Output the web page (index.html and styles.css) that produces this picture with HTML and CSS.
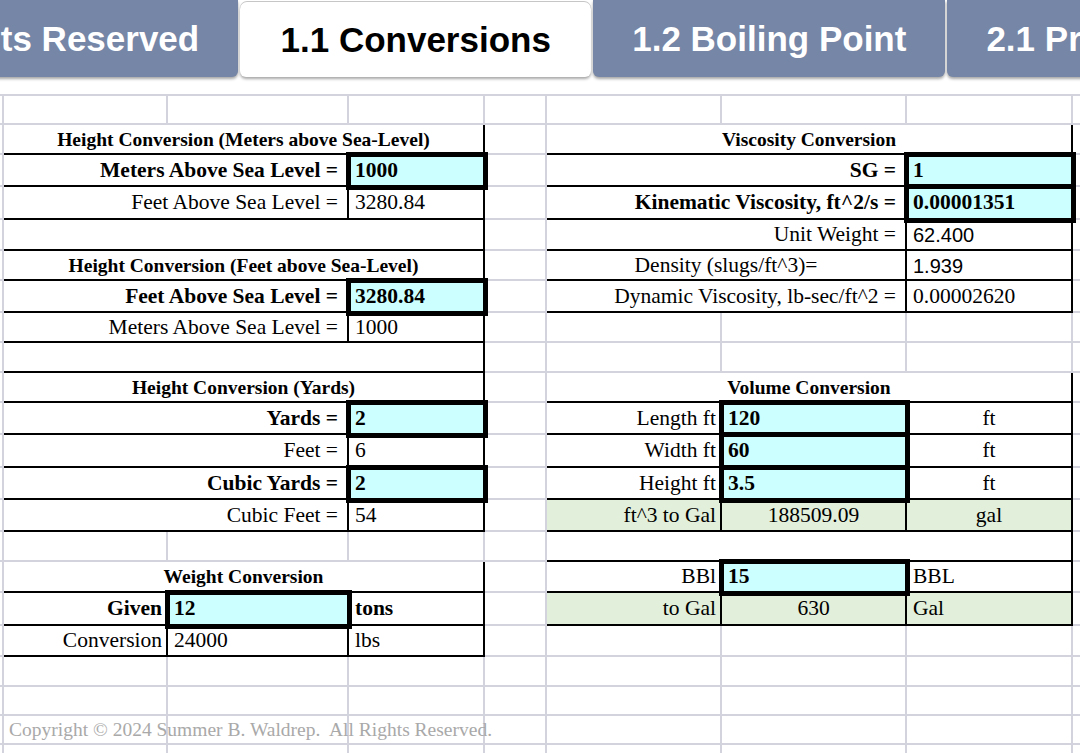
FILE: index.html
```html
<!DOCTYPE html>
<html lang="en">
<head>
<meta charset="utf-8">
<title>1.1 Conversions</title>
<link rel="stylesheet" href="styles.css">
</head>
<body>
<div class="topbar">
  <nav class="tabs">
    <div class="tab">Rights Reserved</div>
    <div class="tab active">1.1 Conversions</div>
    <div class="tab">1.2 Boiling Point</div>
    <div class="tab">2.1 Pressure Drop</div>
  </nav>
</div>
<main class="sheet">
  <!-- row 1 -->
  <div class="c"></div><div class="c"></div><div class="c"></div><div class="c"></div><div class="c"></div><div class="c"></div><div class="c"></div><div class="c"></div><div class="c"></div>
  <!-- row 2 -->
  <div class="c"></div>
  <div class="c s3 k h">Height Conversion (Meters above Sea-Level)</div>
  <div class="c"></div>
  <div class="c s3 k h">Viscosity Conversion</div>
  <div class="c"></div>
  <!-- row 3 -->
  <div class="c"></div>
  <div class="c s2 k l eq b">Meters Above Sea Level =</div>
  <div class="c k v in">1000</div>
  <div class="c"></div>
  <div class="c s2 k l eq b">SG =</div>
  <div class="c k v in">1</div>
  <div class="c"></div>
  <!-- row 4 -->
  <div class="c"></div>
  <div class="c s2 k l eq">Feet Above Sea Level =</div>
  <div class="c k v">3280.84</div>
  <div class="c"></div>
  <div class="c s2 k l eq b">Kinematic Viscosity, ft^2/s =</div>
  <div class="c k v in">0.00001351</div>
  <div class="c"></div>
  <!-- row 5 -->
  <div class="c"></div>
  <div class="c s3 k"></div>
  <div class="c"></div>
  <div class="c s2 k l eq">Unit Weight =</div>
  <div class="c k v sans">62.400</div>
  <div class="c"></div>
  <!-- row 6 -->
  <div class="c"></div>
  <div class="c s3 k h">Height Conversion (Feet above Sea-Level)</div>
  <div class="c"></div>
  <div class="c s2 k m">Density (slugs/ft^3)=</div>
  <div class="c k v sans">1.939</div>
  <div class="c"></div>
  <!-- row 7 -->
  <div class="c"></div>
  <div class="c s2 k l eq b">Feet Above Sea Level =</div>
  <div class="c k v in">3280.84</div>
  <div class="c"></div>
  <div class="c s2 k l eq">Dynamic Viscosity, lb-sec/ft^2 =</div>
  <div class="c k v">0.00002620</div>
  <div class="c"></div>
  <!-- row 8 -->
  <div class="c"></div>
  <div class="c s2 k l eq">Meters Above Sea Level =</div>
  <div class="c k v">1000</div>
  <div class="c"></div><div class="c"></div><div class="c"></div><div class="c"></div><div class="c"></div>
  <!-- row 9 -->
  <div class="c"></div>
  <div class="c s3 k"></div>
  <div class="c"></div><div class="c"></div><div class="c"></div><div class="c"></div><div class="c"></div>
  <!-- row 10 -->
  <div class="c"></div>
  <div class="c s3 k h">Height Conversion (Yards)</div>
  <div class="c"></div>
  <div class="c s3 k h">Volume Conversion</div>
  <div class="c"></div>
  <!-- row 11 -->
  <div class="c"></div>
  <div class="c s2 k l eq b">Yards =</div>
  <div class="c k v in">2</div>
  <div class="c"></div>
  <div class="c k l">Length ft</div>
  <div class="c k v in">120</div>
  <div class="c k m">ft</div>
  <div class="c"></div>
  <!-- row 12 -->
  <div class="c"></div>
  <div class="c s2 k l eq">Feet =</div>
  <div class="c k v">6</div>
  <div class="c"></div>
  <div class="c k l">Width ft</div>
  <div class="c k v in">60</div>
  <div class="c k m">ft</div>
  <div class="c"></div>
  <!-- row 13 -->
  <div class="c"></div>
  <div class="c s2 k l eq b">Cubic Yards =</div>
  <div class="c k v in">2</div>
  <div class="c"></div>
  <div class="c k l">Height ft</div>
  <div class="c k v in">3.5</div>
  <div class="c k m">ft</div>
  <div class="c"></div>
  <!-- row 14 -->
  <div class="c"></div>
  <div class="c s2 k l eq">Cubic Feet =</div>
  <div class="c k v">54</div>
  <div class="c"></div>
  <div class="c k l g">ft^3 to Gal</div>
  <div class="c k m g">188509.09</div>
  <div class="c k m g">gal</div>
  <div class="c"></div>
  <!-- row 15 -->
  <div class="c"></div><div class="c"></div><div class="c"></div><div class="c"></div><div class="c"></div>
  <div class="c s3 k"></div>
  <div class="c"></div>
  <!-- row 16 -->
  <div class="c"></div>
  <div class="c s3 k h">Weight Conversion</div>
  <div class="c"></div>
  <div class="c k l">BBl</div>
  <div class="c k v in">15</div>
  <div class="c k v">BBL</div>
  <div class="c"></div>
  <!-- row 17 -->
  <div class="c"></div>
  <div class="c k l b">Given</div>
  <div class="c k v in">12</div>
  <div class="c k v b">tons</div>
  <div class="c"></div>
  <div class="c k l g">to Gal</div>
  <div class="c k m g">630</div>
  <div class="c k v g">Gal</div>
  <div class="c"></div>
  <!-- row 18 -->
  <div class="c"></div>
  <div class="c k l">Conversion</div>
  <div class="c k v">24000</div>
  <div class="c k v">lbs</div>
  <div class="c"></div><div class="c"></div><div class="c"></div><div class="c"></div><div class="c"></div>
  <!-- row 19 -->
  <div class="c"></div><div class="c"></div><div class="c"></div><div class="c"></div><div class="c"></div><div class="c"></div><div class="c"></div><div class="c"></div><div class="c"></div>
  <!-- row 20 -->
  <div class="c"></div><div class="c"></div><div class="c"></div><div class="c"></div><div class="c"></div><div class="c"></div><div class="c"></div><div class="c"></div><div class="c"></div>
  <!-- row 21 -->
  <div class="c"></div>
  <div class="c copy">Copyright © 2024 Summer B. Waldrep.&nbsp; All Rights Reserved.</div>
  <div class="c"></div><div class="c"></div><div class="c"></div><div class="c"></div><div class="c"></div><div class="c"></div><div class="c"></div>
  <!-- row 22 -->
  <div class="c"></div><div class="c"></div><div class="c"></div><div class="c"></div><div class="c"></div><div class="c"></div><div class="c"></div><div class="c"></div><div class="c"></div>
</main>
</body>
</html>
```

FILE: styles.css
```css
:root {
  --grid: #d3d3de;
  --slate: #7686a6;
}

html, body {
  margin: 0;
  padding: 0;
  overflow: hidden;
  background: #fff;
}

body {
  width: 1080px;
  height: 753px;
  font-family: "Liberation Serif", "Times New Roman", serif;
}

/* ---------- tab bar ---------- */
.topbar {
  height: 94px;
  overflow: hidden;
  background: #fff;
}

.tabs {
  display: flex;
  gap: 2px;
  margin-left: -116px;
}

.tab {
  flex: none;
  box-sizing: border-box;
  min-width: 351px;
  height: 77px;
  padding: 0 39px;
  display: flex;
  align-items: center;
  justify-content: center;
  background: var(--slate);
  color: #fff;
  font: 700 35px "Liberation Sans", Arial, sans-serif;
  white-space: nowrap;
  border-radius: 0 0 6px 6px;
  box-shadow: 0 2px 3px rgba(0, 0, 0, 0.35);
}

.tab.active {
  height: 75px;
  margin-top: 2px;
  background: #fff;
  color: #000;
  border-radius: 7px 7px 6px 6px;
  box-shadow: 0 2px 3px rgba(0, 0, 0, 0.35), 0 -1px 0 #c9c9c9;
}

/* ---------- spreadsheet ---------- */
.sheet {
  display: grid;
  grid-template-columns: 4px 164px 181px 136px 62px 175px 185px 166px 120px;
  grid-template-rows: 29px 30px 32px 33px 31px 30px 32px 30px 30px 30px 32px 33px 32px 32px 30px 31px 33px 31px 30px 29px 29px 30px;
  width: max-content;
  border-top: 2px solid var(--grid);
}

.c {
  box-sizing: border-box;
  min-width: 0;
  display: flex;
  align-items: center;
  padding-top: 1px;
  border-right: 2px solid var(--grid);
  border-bottom: 2px solid var(--grid);
  background: #fff;
  color: #000;
  font-size: 21.5px;
  line-height: 1;
  white-space: nowrap;
}

.s2 { grid-column: span 2; }
.s3 { grid-column: span 3; }

/* black table borders */
.k {
  border-right-color: #000;
  border-bottom-color: #000;
}

.h {
  justify-content: center;
  font-weight: 700;
  font-size: 19.5px;
}

.l {
  justify-content: flex-end;
  padding-right: 4px;
}

.eq { padding-right: 9px; }

.v {
  justify-content: flex-start;
  padding-left: 6px;
}

.m { justify-content: center; }

.b { font-weight: 700; }

.sans {
  font-family: "Liberation Sans", Arial, sans-serif;
  font-size: 20px;
}

.g { background: #e2efda; }

.in {
  position: relative;
  z-index: 1;
  background: #ccffff;
  font-weight: 700;
  outline: 5px solid #000;
  outline-offset: -2px;
}

.copy {
  position: relative;
  z-index: 2;
  padding-left: 5px;
  font-size: 19.5px;
  color: #a9a9a9;
}
```
